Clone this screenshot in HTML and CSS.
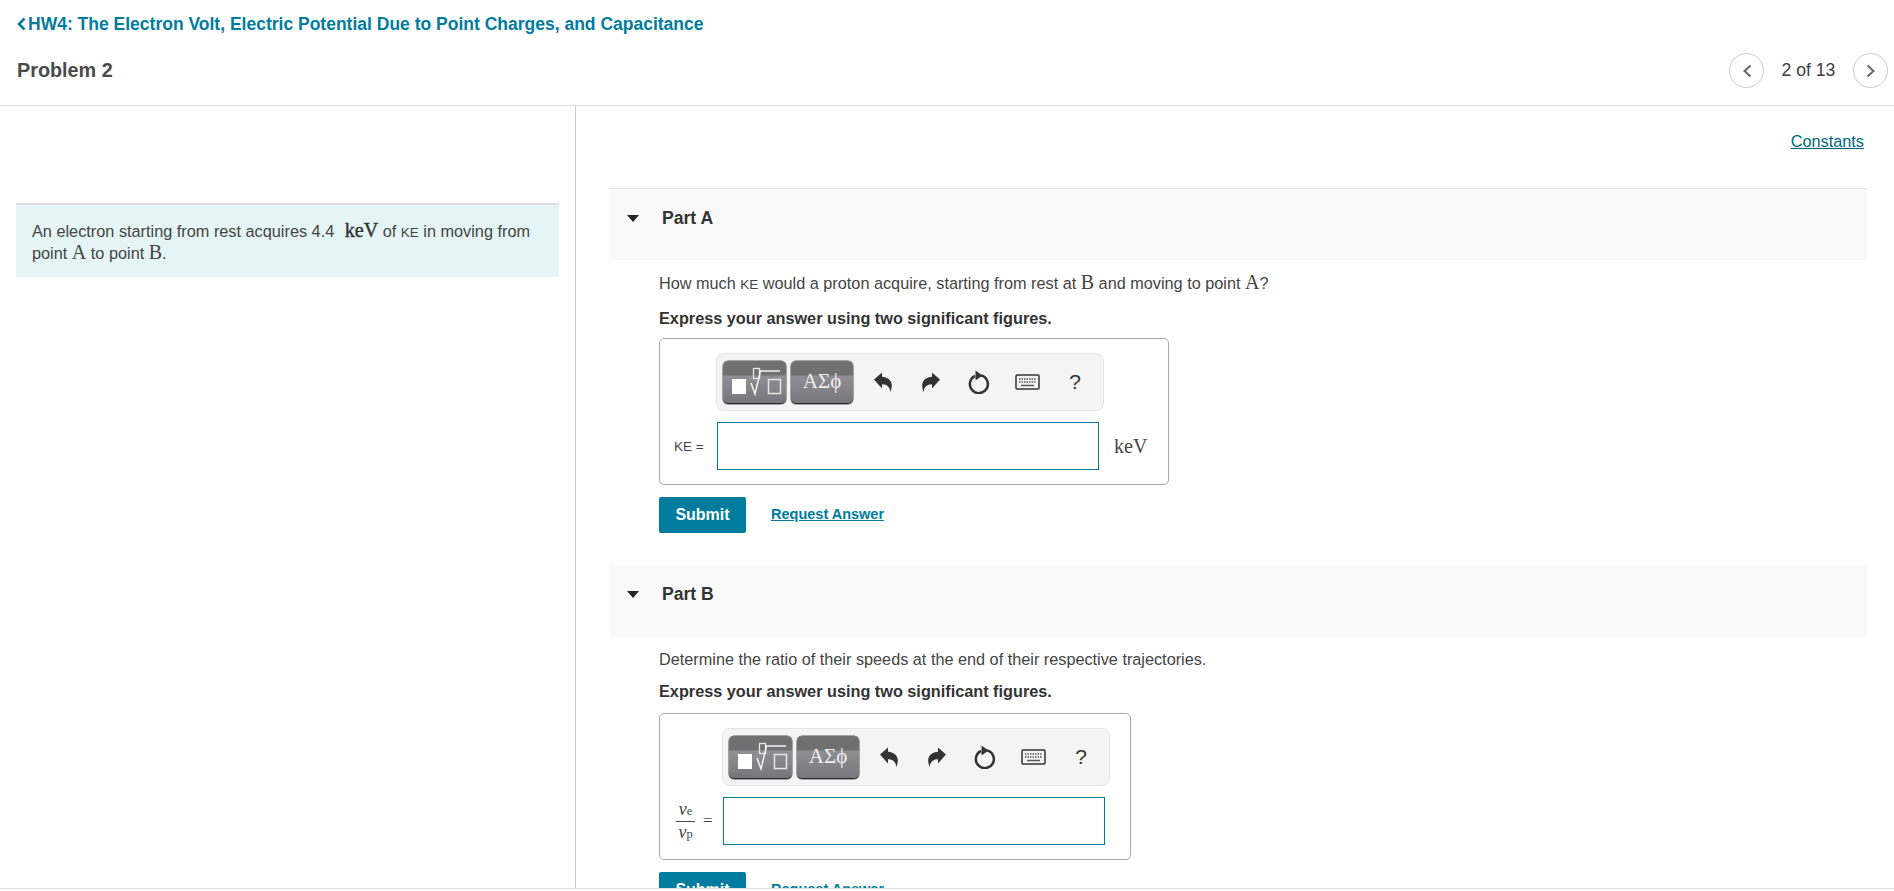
FILE: index.html
```html
<!DOCTYPE html>
<html lang="en">
<head>
<meta charset="utf-8">
<title>Problem 2</title>
<link rel="stylesheet" href="styles.css">
</head>
<body>
<div class="page">
  <header class="header">
    <a class="crumb" href="#"><svg class="crumb-icon" viewBox="0 0 9 14" width="9" height="14"><path d="M7.500 1.500 2 7l5.500 5.500" fill="none" stroke="#007c9e" stroke-width="2.600"/></svg>HW4: The Electron Volt, Electric Potential Due to Point Charges, and Capacitance</a>
    <div class="title-row">
      <h1 class="problem">Problem 2</h1>
      <nav class="pager">
        <span class="round"><svg viewBox="0 0 12 16" width="12" height="16"><path d="M9.500 2.500 3.500 8l6 5.500" fill="none" stroke="#666" stroke-width="2"/></svg></span>
        <span class="count">2 of 13</span>
        <span class="round"><svg viewBox="0 0 12 16" width="12" height="16"><path d="M2.500 2.500 8.500 8l-6 5.500" fill="none" stroke="#666" stroke-width="2"/></svg></span>
      </nav>
    </div>
  </header>
  <main class="columns">
    <aside class="left">
      <div class="intro">An electron starting from rest acquires 4.4 <span class="unit-inline">keV</span> of <span class="caps">KE</span> in moving from point <span class="math">A</span> to point <span class="math">B</span>.</div>
    </aside>
    <section class="right">
      <div class="constants-row"><a class="constants" href="#">Constants</a></div>

      <div class="part-head">
        <svg class="caret" viewBox="0 0 12 7" width="12" height="7"><path d="M0 0h12L6 7z" fill="#222"/></svg>
        <span class="part-title">Part A</span>
      </div>
      <div class="part-body">
        <p class="question first">How much <span class="caps">KE</span> would a proton acquire, starting from rest at <span class="math">B</span> and moving to point <span class="math">A</span>?</p>
        <p class="express">Express your answer using two significant figures.</p>
        <div class="answer answer-a">
          <div class="toolbar">
            <span class="tool-btn tool-wide"><svg viewBox="0 0 63 43" width="63" height="43"><rect x="9" y="19" width="14" height="15" fill="#fff"/><rect x="30.500" y="8.500" width="6" height="10" fill="none" stroke="#e6e6e6" stroke-width="1.300"/><path d="M28 23l4 11 5.500-23H57" fill="none" stroke="#f4f4f4" stroke-width="1.500"/><rect x="45.500" y="19.500" width="12" height="14" fill="none" stroke="#e6e6e6" stroke-width="1.500"/></svg></span>
            <span class="tool-btn tool-greek"><span class="greek">ΑΣϕ</span></span>
            <span class="tool-icon"><svg viewBox="0 0 20 24" width="20" height="24"><path d="M1 9.500 9 2.500v4.200c5.500.3 9.500 3.300 9.800 8.300.1 2.500-.6 5-1.600 7-.1-4.500-2.800-7.600-8.200-7.700v4.300z" fill="#333"/></svg></span>
            <span class="tool-icon"><svg viewBox="0 0 20 24" width="20" height="24"><path d="M19 9.500 11 2.500v4.200C5.500 7 1.500 10 1.200 15c-.1 2.500.6 5 1.600 7 .1-4.500 2.800-7.600 8.200-7.700v4.300z" fill="#333"/></svg></span>
            <span class="tool-icon"><svg viewBox="0 0 24 24" width="24" height="24"><path d="M14 5.400a9 9 0 1 1-6 .6" fill="none" stroke="#333" stroke-width="2.500"/><path d="M8.500 .5 15.500 5.500 8.500 10.500z" fill="#333"/></svg></span>
            <span class="tool-icon"><svg viewBox="0 0 25 16" width="25" height="16"><rect x="1" y="1" width="23" height="14" rx="1" fill="#f4f4f4" stroke="#333" stroke-width="1.500"/><path d="M4 5h17M4 8h17" stroke="#555" stroke-width="1.500" stroke-dasharray="1.500 1"/><path d="M6 11.500h13" stroke="#555" stroke-width="1.500"/></svg></span>
            <span class="tool-icon tool-help">?</span>
          </div>
          <div class="answer-row">
            <span class="label"><span class="label-caps">KE</span> =</span>
            <span class="field"></span>
            <span class="unit">keV</span>
          </div>
        </div>
        <div class="actions">
          <a class="submit" href="#">Submit</a>
          <a class="request" href="#">Request Answer</a>
        </div>
      </div>

      <div class="part-head">
        <svg class="caret" viewBox="0 0 12 7" width="12" height="7"><path d="M0 0h12L6 7z" fill="#222"/></svg>
        <span class="part-title">Part B</span>
      </div>
      <div class="part-body">
        <p class="question second">Determine the ratio of their speeds at the end of their respective trajectories.</p>
        <p class="express express-tight">Express your answer using two significant figures.</p>
        <div class="answer answer-b">
          <div class="toolbar">
            <span class="tool-btn tool-wide"><svg viewBox="0 0 63 43" width="63" height="43"><rect x="9" y="19" width="14" height="15" fill="#fff"/><rect x="30.500" y="8.500" width="6" height="10" fill="none" stroke="#e6e6e6" stroke-width="1.300"/><path d="M28 23l4 11 5.500-23H57" fill="none" stroke="#f4f4f4" stroke-width="1.500"/><rect x="45.500" y="19.500" width="12" height="14" fill="none" stroke="#e6e6e6" stroke-width="1.500"/></svg></span>
            <span class="tool-btn tool-greek"><span class="greek">ΑΣϕ</span></span>
            <span class="tool-icon"><svg viewBox="0 0 20 24" width="20" height="24"><path d="M1 9.500 9 2.500v4.200c5.500.3 9.500 3.300 9.800 8.300.1 2.500-.6 5-1.600 7-.1-4.500-2.800-7.600-8.200-7.700v4.300z" fill="#333"/></svg></span>
            <span class="tool-icon"><svg viewBox="0 0 20 24" width="20" height="24"><path d="M19 9.500 11 2.500v4.200C5.500 7 1.500 10 1.200 15c-.1 2.500.6 5 1.600 7 .1-4.500 2.800-7.600 8.200-7.700v4.300z" fill="#333"/></svg></span>
            <span class="tool-icon"><svg viewBox="0 0 24 24" width="24" height="24"><path d="M14 5.400a9 9 0 1 1-6 .6" fill="none" stroke="#333" stroke-width="2.500"/><path d="M8.500 .5 15.500 5.500 8.500 10.500z" fill="#333"/></svg></span>
            <span class="tool-icon"><svg viewBox="0 0 25 16" width="25" height="16"><rect x="1" y="1" width="23" height="14" rx="1" fill="#f4f4f4" stroke="#333" stroke-width="1.500"/><path d="M4 5h17M4 8h17" stroke="#555" stroke-width="1.500" stroke-dasharray="1.500 1"/><path d="M6 11.500h13" stroke="#555" stroke-width="1.500"/></svg></span>
            <span class="tool-icon tool-help">?</span>
          </div>
          <div class="answer-row">
            <span class="label label-frac">
              <span class="frac"><span class="frac-top"><i>v</i><span class="frac-sub">e</span></span><span class="frac-bot"><i>v</i><span class="frac-sub">p</span></span></span>
              <span class="eq">=</span>
            </span>
            <span class="field"></span>
          </div>
        </div>
        <div class="actions">
          <a class="submit" href="#">Submit</a>
          <a class="request" href="#">Request Answer</a>
        </div>
      </div>
    </section>
  </main>
  <div class="bottom-edge"></div>
</div>
</body>
</html>
```
FILE: styles.css
```css
* { box-sizing: border-box; }
html, body { margin: 0; padding: 0; }
body { font-family: "Liberation Sans", Arial, sans-serif; color: #333; background: #fff; }
.page { position: relative; width: 1894px; height: 891px; overflow: hidden; }

.header { height: 106px; border-bottom: 1px solid #ddd; padding-top: 15px; }
.crumb { display: flex; align-items: center; gap: 2px; height: 18px; padding-left: 17px; font-size: 17.500px; font-weight: 700; color: #007c9e; text-decoration: none; }
.crumb-icon { flex: none; }
.title-row { display: flex; justify-content: space-between; align-items: center; height: 35px; margin-top: 20px; padding: 0 6px 0 17px; }
.problem { margin: 0; font-size: 19.800px; font-weight: 700; color: #4a4a4a; }
.pager { display: flex; align-items: center; }
.round { display: flex; align-items: center; justify-content: center; width: 35px; height: 35px; border: 1px solid #ccc; border-radius: 50%; }
.count { width: 89px; text-align: center; font-size: 17.600px; color: #3d3d3d; }

.columns { display: flex; height: 785px; }
.left { flex: none; width: 576px; border-right: 1px solid #ccc; padding: 97px 0 0 16px; }
.intro { width: 543px; height: 74px; padding: 16px 16px 0; background: #e5f5f6; border-top: 2px solid #ddd; font-size: 16.300px; line-height: 20px; color: #444; }
.unit-inline { margin-left: 6px; font-family: "Liberation Serif", serif; font-size: 20px; line-height: 0; color: #333; -webkit-text-stroke: .4px #333; }
.math { font-family: "Liberation Serif", serif; font-size: 20px; line-height: 0; color: #444; }
.caps { font-size: 13.500px; }

.right { flex: 1; padding: 0 27px 0 33px; min-width: 0; }
.constants-row { display: flex; justify-content: flex-end; height: 82px; padding: 26px 3px 0 0; }
.constants { font-size: 16.300px; line-height: 18px; height: 19px; color: #00677f; }
.part-head { display: flex; align-items: center; height: 72px; padding: 0 0 13px 18px; background: #f9f9f9; border-top: 1px solid #e2e2e2; }
.part-head + .part-body + .part-head { border-top: 0; }
.caret { flex: none; margin-right: 23px; }
.part-title { font-size: 17.600px; font-weight: 700; color: #333; }
.part-body { padding-left: 50px; }

.question { margin: 0; font-size: 16.250px; line-height: 24px; color: #444; }
.question.first { padding-top: 11px; }
.question.second { padding-top: 10px; }
.express { margin: 9px 0 0; font-size: 16.250px; line-height: 24px; font-weight: 700; color: #333; }
.express-tight { margin-top: 8px; }

.answer { margin-top: 8px; padding: 14px 0; border: 1px solid #aaa; border-radius: 5px; }
.answer-a { width: 510px; }
.answer-b { width: 472px; margin-top: 10px; }
.answer-a .toolbar { margin-left: 56px; }
.answer-b .toolbar { margin-left: 62px; }
.toolbar { display: flex; align-items: center; width: 388px; height: 58px; padding: 0 6px; background: #f4f4f4; border: 1px solid #e4e4e4; border-radius: 8px; }
.tool-btn { display: flex; align-items: center; justify-content: center; flex: none; height: 43px; border-radius: 5px; background: linear-gradient(#707070 0, #707070 14px, #8f8f94 15px, #77777b 100%); border-bottom: 1px solid #2c2c2c; box-shadow: 0 0 0 .5px #555; }
.tool-wide { width: 63px; margin-right: 5px; }
.tool-greek { width: 62px; margin-right: 6px; }
.greek { font-family: "Liberation Serif", serif; font-size: 21px; color: #eee; }
.tool-icon { display: flex; align-items: center; justify-content: center; flex: none; width: 48px; height: 43px; }
.tool-help { font-size: 21px; color: #333; }

.answer-row { display: flex; align-items: center; margin-top: 11px; }
.label { flex: none; padding-left: 14px; font-size: 13.500px; color: #444; }
.answer-a .label { width: 57px; }
.label-caps { font-size: 13.500px; }
.label-frac { display: flex; align-items: center; width: 63px; padding-left: 16px; font-family: "Liberation Serif", serif; }
.frac { display: flex; flex-direction: column; align-items: center; width: 19px; font-size: 18px; line-height: 20px; }
.frac-top { border-bottom: 1px solid #444; width: 100%; text-align: center; white-space: nowrap; }
.frac-bot { text-align: center; white-space: nowrap; }
.frac-sub { font-size: 12.500px; }
.eq { margin-left: 8px; font-size: 17px; }
.field { flex: none; width: 382px; height: 48px; background: #fff; border: 1px solid #007c9e; }
.unit { margin-left: 15px; font-family: "Liberation Serif", serif; font-size: 20px; color: #444; }

.actions { display: flex; align-items: center; margin-top: 12px; height: 36px; margin-bottom: 32px; }
.submit { display: flex; align-items: center; justify-content: center; width: 87px; height: 36px; background: #007c9e; border-radius: 2px; color: #fff; font-size: 16px; font-weight: 700; text-decoration: none; }
.request { margin-left: 25px; margin-top: -2px; font-size: 14.500px; font-weight: 700; color: #007c9e; }

.bottom-edge { position: absolute; left: 0; right: 0; bottom: 0; height: 3px; background: #fff; border-top: 1px solid #ddd; }
```
